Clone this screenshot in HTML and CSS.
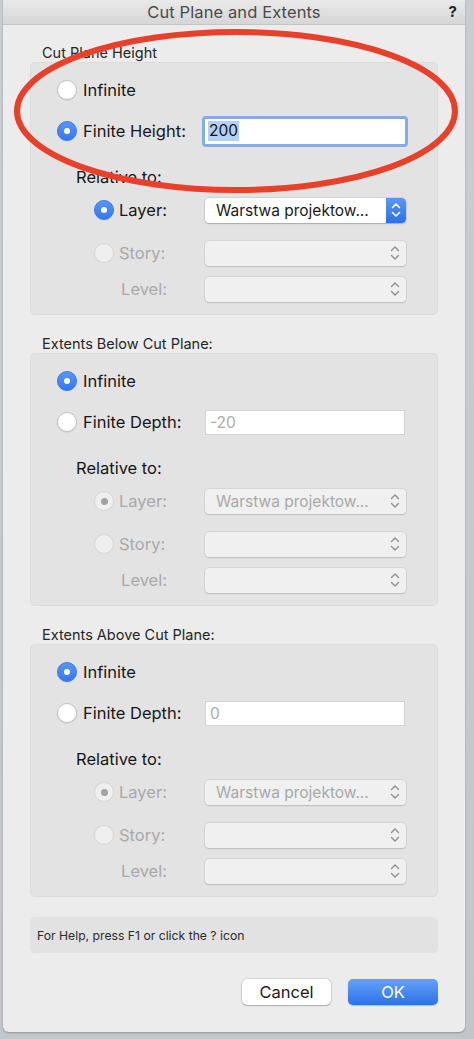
FILE: index.html
```html
<!DOCTYPE html>
<html lang="en">
<head>
<meta charset="utf-8">
<title>Cut Plane and Extents</title>
<link rel="stylesheet" href="styles.css">
</head>
<body>
<div class="desk">
  <div class="dialog">
    <div class="titlebar">
      <span class="title">Cut Plane and Extents</span>
      <span class="help-q">?</span>
    </div>

    <div class="section first">
      <div class="sec-label">Cut Plane Height</div>
      <div class="box">
        <div class="row r-inf"><span class="radio"></span><span class="lbl">Infinite</span></div>
        <div class="row r-fin"><span class="radio on"></span><span class="lbl wlbl">Finite Height:</span><span class="field focus"><span class="sel-text">200</span></span></div>
        <div class="rel">Relative to:</div>
        <div class="row r-layer"><span class="radio on"></span><span class="lbl slbl">Layer:</span><span class="select active"><span class="sval">Warstwa projektow...</span><span class="stepper blue"><svg viewBox="0 0 20 26" width="20" height="26"><path d="M6.5 10.5 L10 7 L13.5 10.5 M6.5 15.5 L10 19 L13.5 15.5" fill="none" stroke="#fff" stroke-width="1.6" stroke-linecap="round" stroke-linejoin="round"/></svg></span></span></div>
        <div class="row r-story dis"><span class="radio"></span><span class="lbl slbl">Story:</span><span class="select"><span class="sval"></span><span class="stepper"><svg viewBox="0 0 20 26" width="20" height="26"><path d="M6.5 10.5 L10 7 L13.5 10.5 M6.5 15.5 L10 19 L13.5 15.5" fill="none" stroke="#8e8e8e" stroke-width="1.4" stroke-linecap="round" stroke-linejoin="round"/></svg></span></span></div>
        <div class="row r-level dis"><span class="noradio"></span><span class="lbl slbl right">Level:</span><span class="select"><span class="sval"></span><span class="stepper"><svg viewBox="0 0 20 26" width="20" height="26"><path d="M6.5 10.5 L10 7 L13.5 10.5 M6.5 15.5 L10 19 L13.5 15.5" fill="none" stroke="#8e8e8e" stroke-width="1.4" stroke-linecap="round" stroke-linejoin="round"/></svg></span></span></div>
      </div>
    </div>

    <div class="section">
      <div class="sec-label">Extents Below Cut Plane:</div>
      <div class="box">
        <div class="row r-inf"><span class="radio on"></span><span class="lbl">Infinite</span></div>
        <div class="row r-fin"><span class="radio"></span><span class="lbl wlbl">Finite Depth:</span><span class="field"><span class="ph">-20</span></span></div>
        <div class="rel">Relative to:</div>
        <div class="row r-layer dis"><span class="radio ondis"></span><span class="lbl slbl">Layer:</span><span class="select"><span class="sval">Warstwa projektow...</span><span class="stepper"><svg viewBox="0 0 20 26" width="20" height="26"><path d="M6.5 10.5 L10 7 L13.5 10.5 M6.5 15.5 L10 19 L13.5 15.5" fill="none" stroke="#8e8e8e" stroke-width="1.4" stroke-linecap="round" stroke-linejoin="round"/></svg></span></span></div>
        <div class="row r-story dis"><span class="radio"></span><span class="lbl slbl">Story:</span><span class="select"><span class="sval"></span><span class="stepper"><svg viewBox="0 0 20 26" width="20" height="26"><path d="M6.5 10.5 L10 7 L13.5 10.5 M6.5 15.5 L10 19 L13.5 15.5" fill="none" stroke="#8e8e8e" stroke-width="1.4" stroke-linecap="round" stroke-linejoin="round"/></svg></span></span></div>
        <div class="row r-level dis"><span class="noradio"></span><span class="lbl slbl right">Level:</span><span class="select"><span class="sval"></span><span class="stepper"><svg viewBox="0 0 20 26" width="20" height="26"><path d="M6.5 10.5 L10 7 L13.5 10.5 M6.5 15.5 L10 19 L13.5 15.5" fill="none" stroke="#8e8e8e" stroke-width="1.4" stroke-linecap="round" stroke-linejoin="round"/></svg></span></span></div>
      </div>
    </div>

    <div class="section">
      <div class="sec-label">Extents Above Cut Plane:</div>
      <div class="box">
        <div class="row r-inf"><span class="radio on"></span><span class="lbl">Infinite</span></div>
        <div class="row r-fin"><span class="radio"></span><span class="lbl wlbl">Finite Depth:</span><span class="field"><span class="ph">0</span></span></div>
        <div class="rel">Relative to:</div>
        <div class="row r-layer dis"><span class="radio ondis"></span><span class="lbl slbl">Layer:</span><span class="select"><span class="sval">Warstwa projektow...</span><span class="stepper"><svg viewBox="0 0 20 26" width="20" height="26"><path d="M6.5 10.5 L10 7 L13.5 10.5 M6.5 15.5 L10 19 L13.5 15.5" fill="none" stroke="#8e8e8e" stroke-width="1.4" stroke-linecap="round" stroke-linejoin="round"/></svg></span></span></div>
        <div class="row r-story dis"><span class="radio"></span><span class="lbl slbl">Story:</span><span class="select"><span class="sval"></span><span class="stepper"><svg viewBox="0 0 20 26" width="20" height="26"><path d="M6.5 10.5 L10 7 L13.5 10.5 M6.5 15.5 L10 19 L13.5 15.5" fill="none" stroke="#8e8e8e" stroke-width="1.4" stroke-linecap="round" stroke-linejoin="round"/></svg></span></span></div>
        <div class="row r-level dis"><span class="noradio"></span><span class="lbl slbl right">Level:</span><span class="select"><span class="sval"></span><span class="stepper"><svg viewBox="0 0 20 26" width="20" height="26"><path d="M6.5 10.5 L10 7 L13.5 10.5 M6.5 15.5 L10 19 L13.5 15.5" fill="none" stroke="#8e8e8e" stroke-width="1.4" stroke-linecap="round" stroke-linejoin="round"/></svg></span></span></div>
      </div>
    </div>

    <div class="helpbox">For Help, press F1 or click the ? icon</div>

    <div class="buttons">
      <span class="btn cancel">Cancel</span>
      <span class="btn ok">OK</span>
    </div>

    <svg class="annot" width="474" height="240" viewBox="0 0 474 240">
      <ellipse cx="236" cy="111" rx="219" ry="79" fill="none" stroke="#e8412b" stroke-width="6"/>
    </svg>
  </div>
</div>
</body>
</html>
```

FILE: styles.css
```css
html, body {
  margin: 0;
  padding: 0;
}
body {
  background: #c6c9ce;
  font-family: "Inter", "Noto Sans", "Liberation Sans", sans-serif;
  color: #1e1e1e;
}
.desk {
  width: 474px;
  height: 1039px;
  background: linear-gradient(#c9ccd1, #c2c5ca);
  position: relative;
  overflow: hidden;
}
.dialog {
  position: relative;
  margin-left: 3px;
  width: 462px;
  height: 1032px;
  background: #ececec;
  border-radius: 0 0 6px 6px;
  box-shadow: 0 1px 2px rgba(0,0,0,0.25);
  box-sizing: border-box;
  padding: 0 27px;
}
.titlebar {
  margin: 0 -27px;
  height: 25px;
  background: linear-gradient(#e9e9e9, #d6d6d6);
  border-bottom: 1px solid #c4c4c4;
  box-sizing: border-box;
  display: flex;
  align-items: center;
  justify-content: center;
  position: relative;
}
.title {
  font-size: 16.5px;
  color: #4a4a4a;
  letter-spacing: 0.1px;
}
.help-q {
  position: absolute;
  right: 8px;
  top: 2px;
  font-size: 15px;
  font-weight: 700;
  color: #222;
}
.section {
  margin-top: 20px;
}
.section.first {
  margin-top: 19px;
}
.sec-label {
  height: 18px;
  line-height: 18px;
  padding-left: 12px;
  font-size: 14.5px;
  color: #262626;
}
.box {
  background: #e3e3e3;
  border: 1px solid #dcdcdc;
  border-radius: 5px;
  box-sizing: border-box;
  height: 253px;
  padding: 8px 0 0 26px;
}
.row {
  display: flex;
  align-items: center;
}
.r-inf { height: 38px; }
.r-fin { height: 44px; }
.rel {
  margin-top: 12px;
  height: 24px;
  line-height: 24px;
  padding-left: 19px;
  font-size: 16.5px;
  color: #161616;
}
.r-layer { margin-top: 8px; height: 26px; padding-left: 37px; }
.r-story { margin-top: 17px; height: 26px; padding-left: 37px; }
.r-level { margin-top: 10px; height: 26px; padding-left: 37px; }

.radio, .noradio {
  width: 20px;
  height: 20px;
  flex: none;
  box-sizing: border-box;
  border-radius: 50%;
}
.radio {
  background: #fff;
  border: 1px solid #c3c3c3;
  box-shadow: 0 0.5px 1px rgba(0,0,0,0.12);
  position: relative;
}
.radio.on {
  background: linear-gradient(#5896f6, #3478ee);
  border-color: #3a78e4;
}
.radio.on::after {
  content: "";
  position: absolute;
  left: 6px;
  top: 6px;
  width: 6px;
  height: 6px;
  border-radius: 50%;
  background: #fff;
}
.dis .radio {
  background: #efefef;
  border-color: #d6d6d6;
  box-shadow: none;
}
.radio.ondis::after {
  content: "";
  position: absolute;
  left: 5.5px;
  top: 5.5px;
  width: 7px;
  height: 7px;
  border-radius: 50%;
  background: #a3a3a3;
}
.lbl {
  font-size: 16.5px;
  color: #171717;
  padding-left: 6px;
  white-space: nowrap;
}
.wlbl {
  width: 128px;
  box-sizing: border-box;
  flex: none;
}
.slbl {
  width: 91px;
  box-sizing: border-box;
  flex: none;
  padding-left: 5px;
}
.slbl.right {
  text-align: right;
  padding-right: 38px;
}
.dis .lbl {
  color: #a9a9a9;
}
.field {
  width: 200px;
  height: 25px;
  box-sizing: border-box;
  background: #fff;
  border: 1px solid #d2d2d2;
  display: flex;
  align-items: center;
  padding-left: 4px;
  font-size: 15.5px;
}
.field.focus {
  margin-left: -3px;
  width: 206px;
  height: 31px;
  border: 3px solid #86ace8;
  border-radius: 4px;
  padding-left: 3px;
}
.sel-text {
  background: #b3d0f5;
  color: #111;
  padding: 0 1px;
  line-height: 20px;
}
.ph {
  color: #acacac;
}
.select {
  width: 201px;
  height: 25px;
  box-sizing: border-box;
  background: #f0f0f0;
  border-radius: 4px;
  box-shadow: 0 0 0 0.5px rgba(0,0,0,0.12), 0 1px 1.5px rgba(0,0,0,0.12);
  display: flex;
  align-items: center;
  justify-content: space-between;
  overflow: hidden;
}
.select.active {
  background: #fff;
  box-shadow: 0 0 0 0.5px rgba(0,0,0,0.15), 0 1px 1.5px rgba(0,0,0,0.2);
}
.sval {
  padding-left: 11px;
  font-size: 15.5px;
  color: #1a1a1a;
  white-space: nowrap;
}
.dis .sval {
  color: #a9a9a9;
}
.stepper {
  width: 20px;
  height: 25px;
  flex: none;
  display: flex;
  align-items: center;
  justify-content: center;
  margin-right: 1px;
}
.stepper svg {
  display: block;
}
.stepper.blue {
  margin-right: 0;
  background: linear-gradient(#5b98f6, #2d6fe8);
  border-radius: 0 4px 4px 0;
}
.helpbox {
  margin-top: 20px;
  height: 36px;
  box-sizing: border-box;
  background: #e2e2e2;
  border-radius: 5px;
  padding: 0 7px;
  display: flex;
  align-items: center;
  font-size: 12.2px;
  color: #2a2a2a;
}
.buttons {
  margin-top: 26px;
  display: flex;
  justify-content: flex-end;
  gap: 17px;
}
.btn {
  height: 26px;
  border-radius: 5px;
  display: flex;
  align-items: center;
  justify-content: center;
  font-size: 16.5px;
  box-sizing: border-box;
}
.cancel {
  width: 89px;
  background: #fff;
  color: #1a1a1a;
  box-shadow: 0 0 0 0.5px rgba(0,0,0,0.18), 0 1px 1.5px rgba(0,0,0,0.2);
}
.ok {
  width: 90px;
  background: linear-gradient(#63a3f8, #2e70ea);
  color: #fff;
  box-shadow: 0 0.5px 1px rgba(0,0,0,0.2);
}
.annot {
  position: absolute;
  left: -3px;
  top: 0;
  pointer-events: none;
}
```
